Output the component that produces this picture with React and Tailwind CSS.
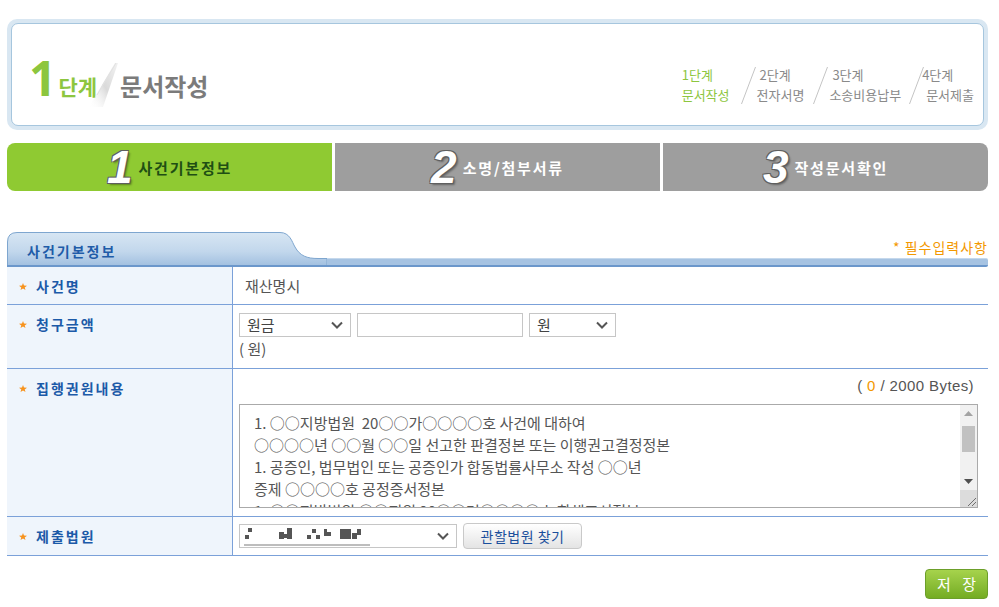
import React from "react";

const Star = () => (
  <svg width="8" height="7" viewBox="0 0 8 7" className="shrink-0">
    <path d="M4 0 L5 2.4 L8 2.7 L5.7 4.4 L6.5 7 L4 5.5 L1.5 7 L2.3 4.4 L0 2.7 L3 2.4Z" fill="#f7931e" />
  </svg>
);

const Chevron = () => (
  <svg width="12" height="8" viewBox="0 0 12 8" className="shrink-0">
    <polyline points="1,1.5 6,6.5 11,1.5" fill="none" stroke="#555" strokeWidth="2" />
  </svg>
);

const Slash = ({ className }) => (
  <svg width="15" height="37" viewBox="0 0 15 37" className={className}>
    <line x1="14.5" y1="0" x2="0.5" y2="37" stroke="#c4c4c4" strokeWidth="1" />
  </svg>
);

const Select = ({ w, label }) => (
  <div className={`${w} h-[24px] border border-[#c6c6c6] bg-white flex items-center justify-between pl-[7px] pr-[7px] text-[15px] leading-[20px] text-[#444]`}>
    <span>{label}</span>
    <Chevron />
  </div>
);

const Label = ({ children }) => (
  <div className="w-[226px] shrink-0 bg-[#eff5fc] border-r border-[#7ba1d9] pl-[12px] pt-[9px]">
    <div className="flex items-center gap-[9px] h-[20px]">
      <Star />
      <span className="text-[14px] leading-[20px] font-bold tracking-[2px] text-[#1c5aa8]">{children}</span>
    </div>
  </div>
);

const textareaText = `1. ○○지방법원  20○○가○○○○호 사건에 대하여
○○○○년 ○○월 ○○일 선고한 판결정본 또는 이행권고결정정본
1. 공증인, 법무법인 또는 공증인가 합동법률사무소 작성 ○○년
증제 ○○○○호 공정증서정본
1. ○○지방법원 ○○지원 20○○머○○○○호 화해조서정본
또는 조정조서정본
1. 확정된 지급명령정본
(사건번호 : 20○○차○○○○)
1. 기타 집행권원`;

const StepTab = ({ num, text, active, rounded }) => (
  <div
    className={`flex-1 flex items-center justify-center ${rounded} ${
      active ? "bg-[#8fca32]" : "bg-[#9e9e9e]"
    }`}
  >
    <span className="font-['Liberation_Sans',sans-serif] italic font-bold text-[46px] leading-[46px] text-white [text-shadow:-1px_-1px_0_#5f5f5f,1px_-1px_0_#5f5f5f,-1px_1px_0_#5f5f5f,1px_1px_0_#5f5f5f,2px_2px_2px_rgba(0,0,0,0.35)] mr-[6px]">
      {num}
    </span>
    <span
      className={`text-[15px] leading-[20px] font-bold tracking-[1.8px] mt-[2px] ${
        active ? "text-[#1f4f14]" : "text-white"
      }`}
    >
      {text}
    </span>
  </div>
);

export default function App() {
  return (
    <div className="w-[999px] h-[607px] bg-white overflow-hidden font-['Noto_Sans_CJK_KR',sans-serif]">
      <div className="ml-[7px] w-[981px] pt-[19px]">
        {/* Header box */}
        <div className="h-[111px] rounded-[10px] bg-[#d9e7f2] p-[4px]">
          <div className="h-full rounded-[7px] border border-[#a6c6de] bg-white flex items-center justify-between pl-[17px] pr-[9px]">
            <div className="flex items-end mt-[6px]">
              <span className="text-[48px] leading-[48px] font-bold text-[#8cc63e] font-['Noto_Sans',sans-serif]">1</span>
              <span className="text-[21px] leading-[28px] font-bold text-[#8dc63f] ml-[2px] mb-[2px]">단계</span>
              <svg width="34" height="48" viewBox="0 0 34 48" className="-ml-[12px] -mb-[7px]">
                <defs>
                  <linearGradient id="fold" x1="0" y1="1" x2="1" y2="0">
                    <stop offset="0" stopColor="#ffffff" stopOpacity="0" />
                    <stop offset="0.5" stopColor="#dadada" />
                    <stop offset="1" stopColor="#f2f2f2" />
                  </linearGradient>
                </defs>
                <polygon points="4,46 30,2 33,2 18,46" fill="url(#fold)" />
                <line x1="31" y1="2" x2="12" y2="34" stroke="#e2e2e2" strokeWidth="1" />
              </svg>
              <span className="text-[24px] leading-[30px] font-bold text-[#7b7b7b] ml-[1px] mb-[1px]">문서작성</span>
            </div>
            <div className="flex items-center text-[13px] leading-[20px] mt-[21px]">
              <div className="flex flex-col text-[#8dc63f]">
                <span>1단계</span>
                <span>문서작성</span>
              </div>
              <Slash className="ml-[11px]" />
              <div className="ml-[1px] flex flex-col text-[#8a8a8a]">
                <span className="pl-[3px]">2단계</span>
                <span>전자서명</span>
              </div>
              <Slash className="ml-[9px]" />
              <div className="ml-[1px] flex flex-col text-[#8a8a8a]">
                <span className="pl-[3px]">3단계</span>
                <span>소송비용납부</span>
              </div>
              <Slash className="ml-[8px]" />
              <div className="-ml-[2px] flex flex-col text-[#8a8a8a]">
                <span>4단계</span>
                <span className="pl-[4px]">문서제출</span>
              </div>
            </div>
          </div>
        </div>

        {/* Step tabs */}
        <div className="mt-[13px] h-[48px] flex gap-[3px]">
          <StepTab num="1" text="사건기본정보" active rounded="rounded-l-[8px]" />
          <StepTab num="2" text="소명/첨부서류" rounded="" />
          <StepTab num="3" text="작성문서확인" rounded="rounded-r-[8px]" />
        </div>

        {/* Section header */}
        <div className="mt-[41px] h-[35px] flex">
          <div className="relative w-[320px] h-full shrink-0">
            <svg className="absolute inset-0" width="320" height="35" viewBox="0 0 320 35">
              <defs>
                <linearGradient id="tabg" x1="0" y1="0" x2="0" y2="1">
                  <stop offset="0" stopColor="#d7e6f3" />
                  <stop offset="0.55" stopColor="#c2d7ec" />
                  <stop offset="1" stopColor="#9fbedf" />
                </linearGradient>
              </defs>
              <path
                d="M0.5 35 V10 Q0.5 0.5 10 0.5 H273 C283 0.5 285 10 288 15 C293 24 300 26.5 311 26.5 H320 V35 Z"
                fill="url(#tabg)"
                stroke="#7ea6cf"
                strokeWidth="1"
              />
              <rect x="0" y="33" width="320" height="2" fill="#6b97cb" />
            </svg>
            <span className="relative block pl-[20px] pt-[9px] text-[14px] leading-[20px] font-bold tracking-[2px] text-[#1f5ca8]">
              사건기본정보
            </span>
          </div>
          <div className="flex-1 flex flex-col justify-end">
            <div className="text-right text-[14px] leading-[20px] tracking-[1px] text-[#f39800] mb-[1px]">
              * 필수입력사항
            </div>
            <div className="h-[9px] bg-[#a6c3e2] border-t border-[#c5d8ec] border-b-2 border-b-[#6b97cb] rounded-r-[2px]" />
          </div>
        </div>

        {/* Table */}
        <div>
          <div className="flex h-[38px] border-b border-[#7ba1d9]">
            <Label>사건명</Label>
            <div className="flex-1 pl-[12px] pt-[9px] text-[15px] leading-[20px] text-[#555]">재산명시</div>
          </div>
          <div className="flex h-[64px] border-b border-[#7ba1d9]">
            <Label>청구금액</Label>
            <div className="flex-1 pl-[6px] pt-[8px]">
              <div className="flex gap-[6px]">
                <Select w="w-[112px]" label="원금" />
                <div className="w-[166px] h-[24px] border border-[#c6c6c6] bg-white" />
                <Select w="w-[87px]" label="원" />
              </div>
              <div className="mt-[2px] text-[15px] leading-[20px] text-[#555]">( 원)</div>
            </div>
          </div>
          <div className="flex h-[148px] border-b border-[#7ba1d9]">
            <Label>집행권원내용</Label>
            <div className="flex-1 pl-[6px] pr-[10px] pt-[7px]">
              <div className="text-right pr-[4px] text-[15px] leading-[20px] text-[#555] font-['Liberation_Sans',sans-serif] tracking-[0.4px]">
                ( <span className="text-[#f39800]">0</span> / 2000 Bytes)
              </div>
              <div className="relative mt-[8px] h-[104px]">
                <textarea
                  readOnly
                  defaultValue={textareaText}
                  className="block w-full h-full border border-[#aaaaaa] bg-white overflow-hidden resize-none pl-[14px] pr-[22px] pt-[7px] text-[15px] leading-[22px] text-[#555] outline-none whitespace-pre"
                />
                {/* scrollbar overlay */}
                <div className="absolute right-[1px] top-[1px] bottom-[1px] w-[17px] bg-[#f1f1f1] flex flex-col">
                  <div className="h-[17px] flex items-center justify-center">
                    <svg width="9" height="5" viewBox="0 0 9 5"><polygon points="0,5 4.5,0 9,5" fill="#a3a3a3" /></svg>
                  </div>
                  <div className="flex-1 px-[2px] pt-[4px]">
                    <div className="h-[26px] bg-[#c1c1c1]" />
                  </div>
                  <div className="h-[17px] flex items-center justify-center">
                    <svg width="9" height="5" viewBox="0 0 9 5"><polygon points="0,0 9,0 4.5,5" fill="#505050" /></svg>
                  </div>
                  <div className="h-[17px] bg-[#dcdcdc] flex items-end justify-end">
                    <svg width="12" height="12" viewBox="0 0 12 12">
                      <line x1="3" y1="11" x2="11" y2="3" stroke="#6f6f6f" strokeWidth="1" />
                      <line x1="7" y1="11" x2="11" y2="7" stroke="#6f6f6f" strokeWidth="1" />
                    </svg>
                  </div>
                </div>
              </div>
            </div>
          </div>
          <div className="flex h-[39px] border-b border-[#7ba1d9]">
            <Label>제출법원</Label>
            <div className="flex-1 pl-[6px] flex items-center gap-[6px]">
              <div className="w-[218px] h-[24px] border border-[#c6c6c6] bg-white flex items-center justify-between pr-[7px]">
                <svg width="140" height="22" viewBox="0 0 140 22">
                  <g fill="#555">
                    <rect x="8" y="3" width="4" height="4" />
                    <rect x="5" y="10" width="4" height="4" />
                    <rect x="39" y="7" width="5" height="7" />
                    <rect x="44" y="9" width="3" height="4" />
                    <rect x="47" y="3" width="5" height="11" />
                    <rect x="72" y="4" width="4" height="4" />
                    <rect x="67" y="10" width="4" height="4" />
                    <rect x="76" y="10" width="4" height="4" />
                    <rect x="84" y="4" width="3" height="6" />
                    <rect x="84" y="7" width="7" height="4" />
                    <rect x="100" y="4" width="11" height="10" />
                    <rect x="112" y="8" width="5" height="6" />
                    <rect x="117" y="4" width="4" height="6" />
                  </g>
                  <rect x="4" y="19" width="126" height="2" fill="#bdbdbd" />
                </svg>
                <Chevron />
              </div>
              <button className="h-[26px] w-[119px] rounded-[4px] border border-[#c9c9c9] bg-linear-to-b from-white to-[#e4e4e4] text-[14px] leading-[20px] tracking-[0.5px] text-[#1b4f9c]">
                관할법원 찾기
              </button>
            </div>
          </div>
        </div>

        {/* Save */}
        <div className="mt-[13px] flex justify-end">
          <button className="w-[63px] h-[30px] rounded-[4px] border border-[#6c9f2a] bg-linear-to-b from-[#a6d34c] to-[#74ac22] text-white text-[15px] leading-[20px] tracking-[4px] pl-[4px]">
            저 장
          </button>
        </div>
      </div>
    </div>
  );
}
